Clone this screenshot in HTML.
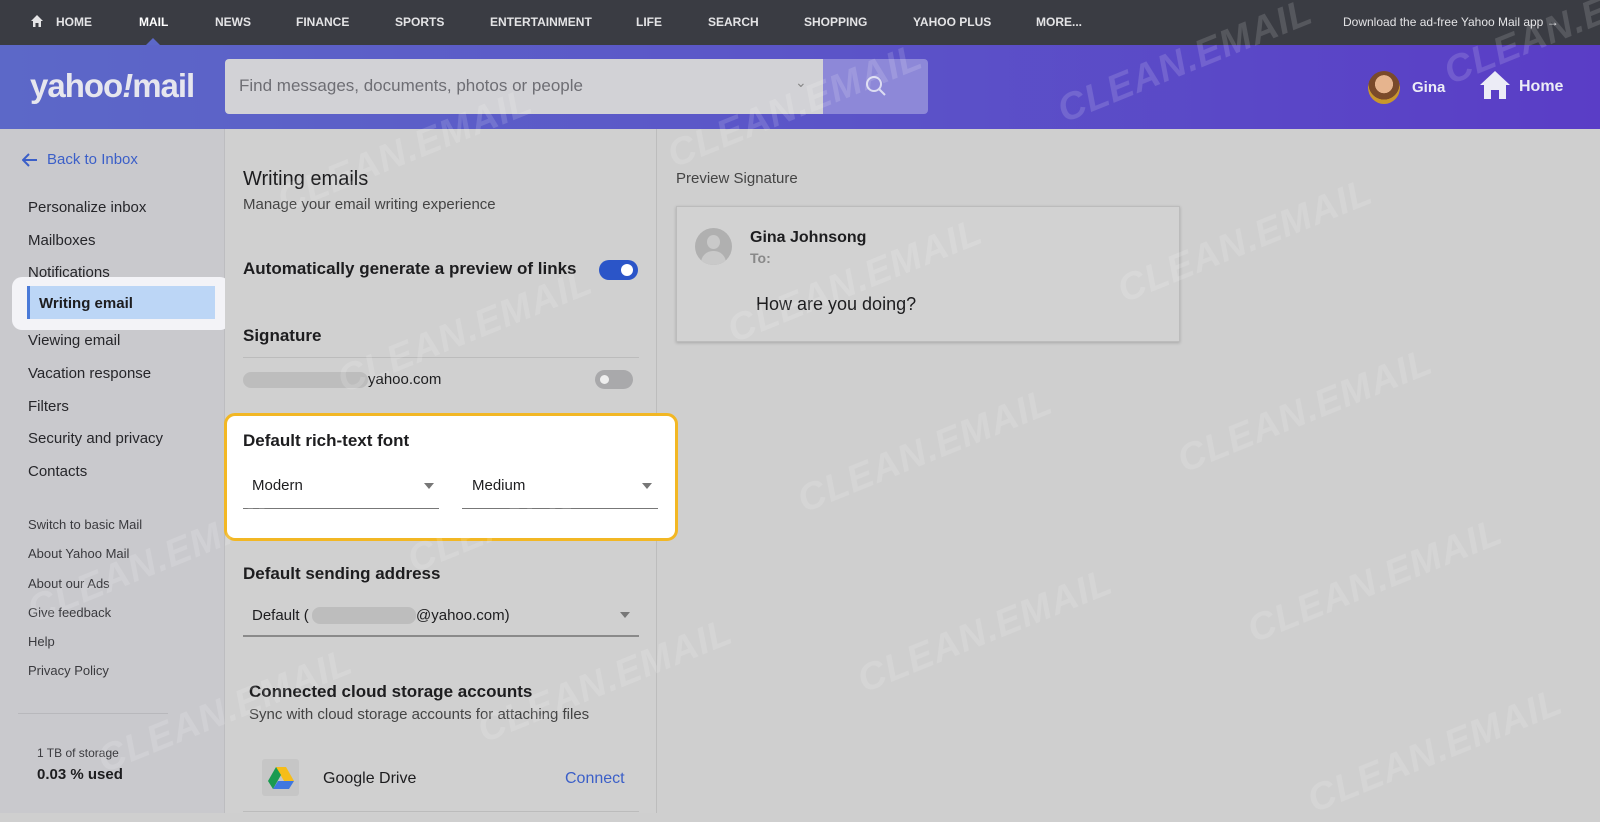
<!DOCTYPE html>
<html><head><meta charset="utf-8"><style>
*{box-sizing:border-box;margin:0;padding:0}
body{width:1600px;height:813px;overflow:hidden;background:#cfcfcf;font-family:"Liberation Sans",Arial,sans-serif;position:relative;color:#1d1d1f}
.top{position:absolute;left:0;top:0;width:1600px;height:45px;background:#3a3c43;color:#e4e4e6;font-size:12px;font-weight:bold}
.top span{position:absolute;top:15px}
.hdr{position:absolute;left:0;top:45px;width:1600px;height:84px;background:linear-gradient(90deg,#5c68c8 0%,#5b55c8 50%,#5a3dc6 100%)}
.abs{position:absolute}
.side{position:absolute;left:0;top:129px;width:225px;height:684px;background:#c9c9cd;border-right:1px solid #bdbdc0}
.mid{position:absolute;left:225px;top:129px;width:432px;height:684px;background:#d0d0d0;border-right:1px solid #bdbdbd}
.si{position:absolute;left:28px;font-size:15px;color:#26262a}
.sm{position:absolute;left:28px;font-size:13px;color:#3a3a3e}
.wm{position:absolute;font-size:38px;font-weight:bold;font-style:italic;color:rgba(255,255,255,0.14);transform:rotate(-22deg);letter-spacing:1px;white-space:nowrap}
</style></head><body>
<div class="top">
<svg class="abs" style="left:30px;top:14px" width="14" height="14" viewBox="0 0 14 14"><path d="M7 1 L13 7 H11 V13 H8.5 V9 H5.5 V13 H3 V7 H1 Z" fill="#e4e4e6"/></svg>
<span style="left:56px">HOME</span><span style="left:139px;color:#fff">MAIL</span><span style="left:215px">NEWS</span><span style="left:296px">FINANCE</span><span style="left:395px">SPORTS</span><span style="left:490px">ENTERTAINMENT</span><span style="left:636px">LIFE</span><span style="left:708px">SEARCH</span><span style="left:804px">SHOPPING</span><span style="left:913px">YAHOO PLUS</span><span style="left:1036px">MORE...</span>
<span style="left:1343px;font-weight:normal;font-size:12px">Download the ad-free Yahoo Mail app →</span>
<div class="abs" style="left:146px;top:38px;width:0;height:0;border-left:7px solid transparent;border-right:7px solid transparent;border-bottom:7px solid #5c68c8"></div>
</div>
<div class="hdr">
<div class="abs" style="left:30px;top:22px;font-size:33px;font-weight:bold;color:#e6e6ee;letter-spacing:-1px">yahoo<span style="font-style:italic">!</span>mail</div>
<div class="abs" style="left:225px;top:14px;width:598px;height:55px;background:#d2d2d6;border-radius:4px 0 0 4px"></div>
<div class="abs" style="left:239px;top:31px;font-size:17px;color:#6e6e74">Find messages, documents, photos or people</div>
<div class="abs" style="left:795px;top:29px;color:#888;font-size:14px">⌄</div>
<div class="abs" style="left:823px;top:14px;width:105px;height:55px;background:#8d88d8;border-radius:0 4px 4px 0"></div>
<svg class="abs" style="left:864px;top:29px" width="24" height="24" viewBox="0 0 24 24"><circle cx="10" cy="10" r="7" stroke="#dcdcf2" stroke-width="2" fill="none"/><path d="M15 15 L21 21" stroke="#dcdcf2" stroke-width="2"/></svg>
<div class="abs" style="left:1368px;top:26px;width:32px;height:33px;border-radius:50%;background:radial-gradient(circle at 50% 40%,#e6b48e 0 35%,#7a4a2a 36% 60%,#c9972c 61%)"></div>
<div class="abs" style="left:1412px;top:34px;font-size:15px;font-weight:bold;color:#ececf6">Gina</div>
<svg class="abs" style="left:1479px;top:24px" width="32" height="32" viewBox="0 0 32 32"><path d="M16 2 L31 16 H27 V30 H20 V21 H12 V30 H5 V16 H1 Z" fill="#ececf6"/></svg>
<div class="abs" style="left:1519px;top:33px;font-size:16px;font-weight:bold;color:#ececf6">Home</div>
</div>
<div class="side">
<svg class="abs" style="left:22px;top:24px" width="16" height="14" viewBox="0 0 16 14"><path d="M15 7 H2 M7 1 L1 7 L7 13" stroke="#3b5fc8" stroke-width="2" fill="none"/></svg>
<div class="abs" style="left:47px;top:22px;font-size:15px;color:#3b5fc8">Back to Inbox</div>
<div class="si" style="top:70px">Personalize inbox</div>
<div class="si" style="top:103px">Mailboxes</div>
<div class="si" style="top:135px">Notifications</div>
<div class="abs" style="left:12px;top:148px;width:218px;height:53px;background:#f3f3f7;border-radius:10px"></div>
<div class="abs" style="left:27px;top:157px;width:188px;height:33px;background:#bcd6f6;border-left:3px solid #4a7ad8"></div>
<div class="abs" style="left:39px;top:166px;font-size:15px;font-weight:bold">Writing email</div>
<div class="si" style="top:203px">Viewing email</div>
<div class="si" style="top:236px">Vacation response</div>
<div class="si" style="top:269px">Filters</div>
<div class="si" style="top:301px">Security and privacy</div>
<div class="si" style="top:334px">Contacts</div>
<div class="sm" style="top:388px">Switch to basic Mail</div>
<div class="sm" style="top:417px">About Yahoo Mail</div>
<div class="sm" style="top:447px">About our Ads</div>
<div class="sm" style="top:476px">Give feedback</div>
<div class="sm" style="top:505px">Help</div>
<div class="sm" style="top:534px">Privacy Policy</div>
<div class="abs" style="left:18px;top:584px;width:150px;border-top:1px solid #b8b8bc"></div>
<div class="abs" style="left:37px;top:617px;font-size:12px;color:#3a3a3e">1 TB of storage</div>
<div class="abs" style="left:37px;top:637px;font-size:15px;font-weight:bold">0.03 % used</div>
</div>
<div class="mid">
<div class="abs" style="left:18px;top:39px;font-size:20px">Writing emails</div>
<div class="abs" style="left:18px;top:67px;font-size:15px;color:#444">Manage your email writing experience</div>
<div class="abs" style="left:18px;top:130px;font-size:17px;font-weight:bold">Automatically generate a preview of links</div>
<div class="abs" style="left:374px;top:131px;width:39px;height:20px;border-radius:10px;background:#2b55c8"><div class="abs" style="left:22px;top:4px;width:12px;height:12px;border-radius:50%;background:#fff"></div></div>
<div class="abs" style="left:18px;top:197px;font-size:17px;font-weight:bold">Signature</div>
<div class="abs" style="left:18px;top:228px;width:396px;border-top:1px solid #bcbcbc"></div>
<div class="abs" style="left:18px;top:243px;width:125px;height:16px;border-radius:8px;background:#bdbdbd"></div>
<div class="abs" style="left:143px;top:242px;font-size:15px">yahoo.com</div>
<div class="abs" style="left:370px;top:241px;width:38px;height:19px;border-radius:10px;background:#a9a9ab"><div class="abs" style="left:5px;top:5px;width:9px;height:9px;border-radius:50%;background:#eee"></div></div>
<div class="abs" style="left:-1px;top:284px;width:454px;height:128px;background:#fff;border:3px solid #f2b724;border-radius:11px"></div>
<div class="abs" style="left:18px;top:302px;font-size:17px;font-weight:bold">Default rich-text font</div>
<div class="abs" style="left:27px;top:348px;font-size:15px">Modern</div>
<div class="abs" style="left:199px;top:354px;border-left:5px solid transparent;border-right:5px solid transparent;border-top:6px solid #777"></div>
<div class="abs" style="left:18px;top:379px;width:196px;border-top:1px solid #777"></div>
<div class="abs" style="left:247px;top:348px;font-size:15px">Medium</div>
<div class="abs" style="left:417px;top:354px;border-left:5px solid transparent;border-right:5px solid transparent;border-top:6px solid #777"></div>
<div class="abs" style="left:237px;top:379px;width:196px;border-top:1px solid #777"></div>
<div class="abs" style="left:18px;top:435px;font-size:17px;font-weight:bold">Default sending address</div>
<div class="abs" style="left:27px;top:478px;font-size:15px">Default (</div>
<div class="abs" style="left:87px;top:478px;width:104px;height:17px;border-radius:8px;background:#bdbdbd"></div>
<div class="abs" style="left:191px;top:478px;font-size:15px">@yahoo.com)</div>
<div class="abs" style="left:395px;top:483px;border-left:5px solid transparent;border-right:5px solid transparent;border-top:6px solid #777"></div>
<div class="abs" style="left:18px;top:506px;width:396px;border-top:2px solid #8a8a8a"></div>
<div class="abs" style="left:24px;top:553px;font-size:17px;font-weight:bold">Connected cloud storage accounts</div>
<div class="abs" style="left:24px;top:577px;font-size:15px;color:#444">Sync with cloud storage accounts for attaching files</div>
<div class="abs" style="left:37px;top:630px;width:37px;height:37px;background:#c6c6c6;border-radius:3px"></div>
<svg class="abs" style="left:42px;top:637px" width="28" height="24" viewBox="0 0 28 24"><path d="M9 1 H19 L27 15 H17 Z" fill="#f6bd1a"/><path d="M9 1 L1 15 L6 23 L14 9 Z" fill="#1a9b50"/><path d="M6 23 H22 L27 15 H11 Z" fill="#3f77e0"/></svg>
<div class="abs" style="left:98px;top:641px;font-size:16px">Google Drive</div>
<div class="abs" style="left:340px;top:641px;font-size:16px;color:#3b5fc8">Connect</div>
<div class="abs" style="left:18px;top:682px;width:396px;border-top:1px solid #bcbcbc"></div>
</div>
<div class="abs" style="left:676px;top:170px;font-size:15px;color:#444">Preview Signature</div>
<div class="abs" style="left:676px;top:206px;width:504px;height:136px;background:#d2d2d2;border:1px solid #bcbcbc;box-shadow:0 1px 3px rgba(0,0,0,0.2)"></div>
<div class="abs" style="left:695px;top:228px;width:37px;height:37px;border-radius:50%;background:#b0b0b0;overflow:hidden"><div class="abs" style="left:12px;top:7px;width:13px;height:14px;border-radius:50%;background:#c9c9c9"></div><div class="abs" style="left:6px;top:23px;width:25px;height:16px;border-radius:12px 12px 0 0;background:#c9c9c9"></div></div>
<div class="abs" style="left:750px;top:229px;font-size:16px;font-weight:bold">Gina Johnsong</div>
<div class="abs" style="left:750px;top:250px;font-size:14px;font-weight:bold;color:#888">To:</div>
<div class="abs" style="left:756px;top:294px;font-size:18px">How are you doing?</div>
<div class="wm" style="left:1050px;top:40px">CLEAN.EMAIL</div>
<div class="wm" style="left:1440px;top:20px">CLEAN.E</div>
<div class="wm" style="left:660px;top:85px">CLEAN.EMAIL</div>
<div class="wm" style="left:270px;top:130px">CLEAN.EMAIL</div>
<div class="wm" style="left:720px;top:260px">CLEAN.EMAIL</div>
<div class="wm" style="left:1110px;top:220px">CLEAN.EMAIL</div>
<div class="wm" style="left:330px;top:310px">CLEAN.EMAIL</div>
<div class="wm" style="left:790px;top:430px">CLEAN.EMAIL</div>
<div class="wm" style="left:1170px;top:390px">CLEAN.EMAIL</div>
<div class="wm" style="left:400px;top:490px">CLEAN.EMAIL</div>
<div class="wm" style="left:1240px;top:560px">CLEAN.EMAIL</div>
<div class="wm" style="left:850px;top:610px">CLEAN.EMAIL</div>
<div class="wm" style="left:470px;top:660px">CLEAN.EMAIL</div>
<div class="wm" style="left:1300px;top:730px">CLEAN.EMAIL</div>
<div class="wm" style="left:90px;top:690px">CLEAN.EMAIL</div>
<div class="wm" style="left:20px;top:540px">CLEAN.EMAIL</div>
</body></html>
